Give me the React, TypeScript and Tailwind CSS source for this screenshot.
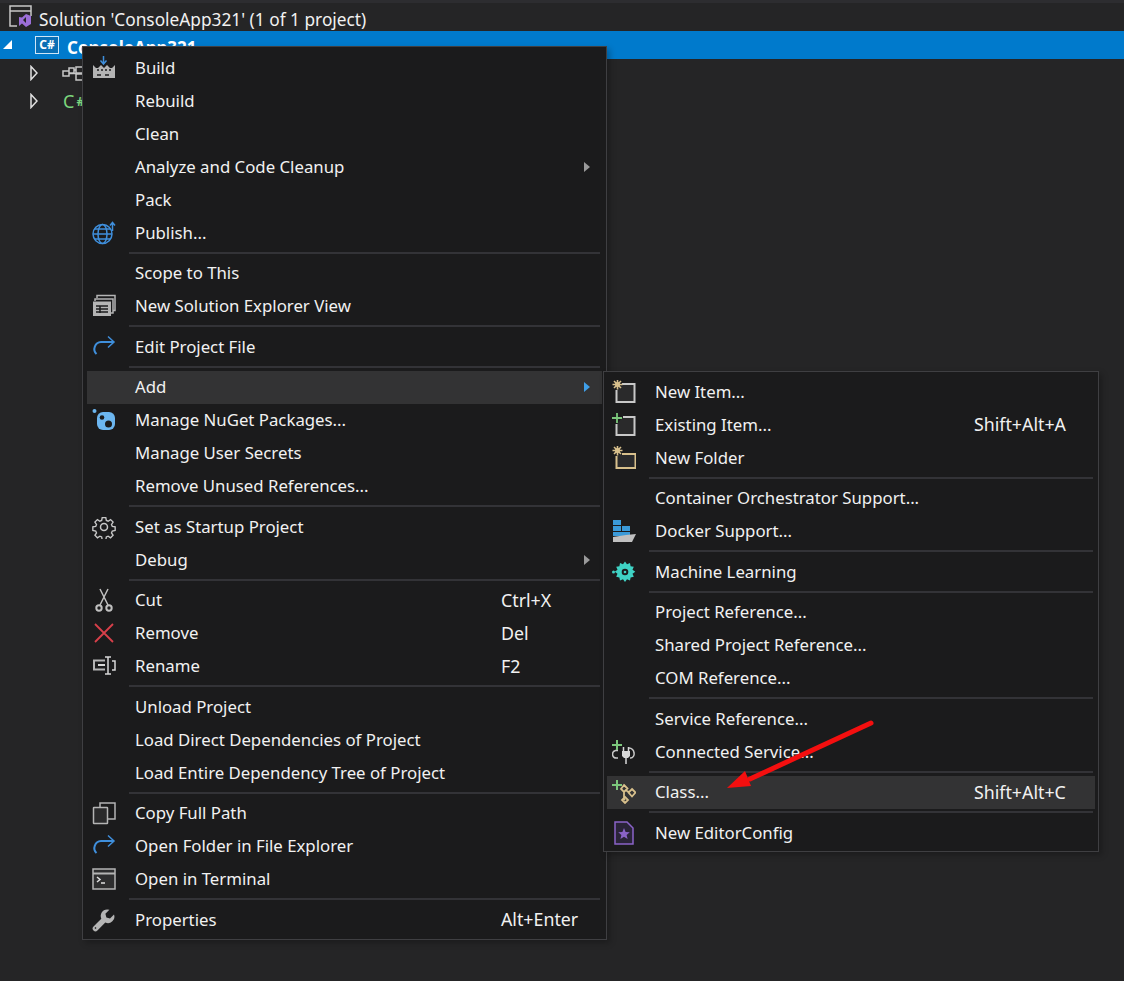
// App.tsx
import type { ReactNode } from 'react';

const GRAY = '#c8c8c8';
const BLUE = '#3f8fdc';
const TAN = '#d8c08c';
const GREEN = '#7cc87c';

const Icon = ({ children }: { children: ReactNode }) => (
  <svg width="24" height="24" viewBox="0 0 24 24" fill="none" strokeWidth="1.5">
    {children}
  </svg>
);

const BuildIcon = () => (
  <Icon>
    <path d="M1 9v13h22V9l-3 3h-2l-3-3-3 3-3-3-3 3H4z" fill="#b4b4b4" />
    <path d="M11.500 0v7M8.500 4.500l3 3.500 3-3.500" stroke={BLUE} />
    <path d="M5 14h2M9 14h2M13 14h2M17 14h2M5 19h4M13 19h4" stroke="#1b1b1c" />
  </Icon>
);

const PublishIcon = () => (
  <Icon>
    <circle cx="10.500" cy="13" r="9.500" stroke={BLUE} />
    <ellipse cx="10.500" cy="13" rx="4.500" ry="9.500" stroke={BLUE} />
    <path d="M1 13h19M2.500 8h16M2.500 18h16M20.500 10V2M18 4.500l2.500-3 2.500 3" stroke={BLUE} />
  </Icon>
);

const ExplorerIcon = () => (
  <Icon>
    <path d="M5 4V1.500h18v15h-2M3 7V5h18v14h-2" stroke="#b4b4b4" />
    <rect x="1" y="7.500" width="18" height="14.500" fill="#b4b4b4" />
    <path d="M4 12h12M4 15h12M4 18h12M8 12v7" stroke="#1b1b1c" />
  </Icon>
);

const RedoIcon = () => (
  <Icon>
    <path d="M21 9H9a7 7 0 0 0-4.500 12" stroke={BLUE} strokeWidth="2" transform="translate(0 -2)" />
    <path d="M16 1.500 22 7l-6 5.500" stroke={BLUE} />
  </Icon>
);

const NugetIcon = () => (
  <Icon>
    <circle cx="2.500" cy="3" r="2" fill="#6cb6f0" />
    <rect x="5" y="4" width="18" height="18" rx="6" fill="#6cb6f0" />
    <circle cx="10" cy="9.500" r="2.300" fill="#1b1b1c" />
    <circle cx="16.500" cy="16" r="3.500" fill="#1b1b1c" />
  </Icon>
);

const GearIcon = () => (
  <Icon>
    <circle cx="12" cy="12" r="3.500" stroke={GRAY} />
    <path
      d="M10 1.500h4l.6 3.200 2 .9 2.700-1.800 2.800 2.800-1.800 2.700.9 2 3.200.6v4l-3.200.6-.9 2 1.800 2.700-2.800 2.800-2.700-1.800-2 .9-.6 3.200h-4l-.6-3.200-2-.9-2.700 1.800-2.800-2.800 1.800-2.700-.9-2-3.200-.6v-4l3.200-.6.9-2-1.800-2.700 2.800-2.800 2.700 1.800 2-.9z"
      transform="translate(1.200 1.200) scale(.9)"
      stroke={GRAY}
    />
  </Icon>
);

const CutIcon = () => (
  <Icon>
    <path d="M8 1l8 16M16 1L8 17" stroke="#c0c0c0" />
    <circle cx="7" cy="20" r="2.700" stroke="#c0c0c0" strokeWidth="2" />
    <circle cx="17" cy="20" r="2.700" stroke="#c0c0c0" strokeWidth="2" />
  </Icon>
);

const RemoveIcon = () => (
  <Icon>
    <path d="M3 3l18 18M21 3L3 21" stroke="#d8404a" strokeWidth="1.800" />
  </Icon>
);

const RenameIcon = () => (
  <Icon>
    <path d="M13 6.500H2v9h11" stroke="#b4b4b4" strokeWidth="2" />
    <path d="M6 11h7" stroke="#d8d8d8" strokeWidth="2" />
    <path d="M13 3h6M13 20h6M16 3v17M20 7h3v9h-3" stroke="#d8d8d8" />
  </Icon>
);

const CopyIcon = () => (
  <Icon>
    <path d="M8 6V2h15v16h-7" stroke="#b4b4b4" />
    <rect x="1.500" y="6.500" width="14" height="16" rx=".5" stroke="#b4b4b4" fill="#2a2a2b" />
  </Icon>
);

const TerminalIcon = () => (
  <Icon>
    <rect x="1" y="2" width="22" height="20" stroke="#b4b4b4" fill="#2e2e2f" />
    <path d="M1 6.500h22" stroke="#b4b4b4" strokeWidth="2" />
    <path d="M5 10l3 2.500-3 2.500M9 16h4" stroke="#e0e0e0" />
  </Icon>
);

const WrenchIcon = () => (
  <Icon>
    <path
      d="M15 1.500a6.500 6.500 0 0 0-5.700 9.200L1.500 18.500a2.700 2.700 0 0 0 3.900 3.900l7.900-7.800a6.500 6.500 0 0 0 8.700-8.200l-4 4-3.600-1-1-3.600 4-4a6 6 0 0 0-2.400-.3z"
      fill="#b4b4b4"
    />
    <path d="M3 20.500l1-1" stroke="#1b1b1c" />
  </Icon>
);

const Spark = ({ x, y }: { x: number; y: number }) => (
  <g transform={`translate(${x} ${y})`}>
    <circle r="2.500" fill={TAN} />
    <path d="M0-5V5M-5 0H5M-3.500-3.500l7 7M3.500-3.500l-7 7" stroke={TAN} strokeWidth="1.600" />
  </g>
);

const NewItemIcon = () => (
  <Icon>
    <path d="M10 4h12.500v18H4.500V10" stroke="#c8c8c8" fill="#2a2a2b" strokeWidth="2" />
    <Spark x={5.5} y={4.5} />
  </Icon>
);

const ExistingItemIcon = () => (
  <Icon>
    <path d="M11 4h11.500v18H4.500V11" stroke="#c8c8c8" fill="#2a2a2b" strokeWidth="2" />
    <path d="M5 0v10M0 5h10" stroke={GREEN} strokeWidth="1.800" />
  </Icon>
);

const NewFolderIcon = () => (
  <Icon>
    <path d="M10 8h13.500v14H4.500V10" stroke={TAN} fill="#2a2a2b" strokeWidth="2" />
    <Spark x={5.5} y={4.5} />
  </Icon>
);

const DockerIcon = () => (
  <Icon>
    <rect x="1" y="1" width="8" height="5" fill="#3a9ad9" />
    <rect x="1" y="7" width="8" height="5" fill="#3a9ad9" />
    <rect x="10" y="7" width="8" height="5" fill="#3a9ad9" />
    <rect x="1" y="13" width="17" height="4" fill="#3a9ad9" />
    <path d="M1 23v-5l13-2 10-1-4 8z" fill="#c0c0c0" />
  </Icon>
);

const MlIcon = () => (
  <Icon>
    <path
      d="M12 1.500l2 2.800 3-1.300.6 3.200 3.200.6-1.300 3 2.800 2-2.800 2 1.300 3-3.200.6-.6 3.200-3-1.300-2 2.800-2-2.800-3 1.300-.6-3.200-3.200-.6 1.300-3-2.800-2 2.800-2-1.300-3 3.200-.6.600-3.200 3 1.300z"
      fill="#3fd2c4"
      transform="translate(1 0)"
    />
    <circle cx="13" cy="12" r="3.300" fill="#1b1b1c" />
    <circle cx="13" cy="12" r="1.300" fill="#3fd2c4" />
    <circle cx="1.500" cy="12" r="1.500" fill="#3fd2c4" />
  </Icon>
);

const ConnectedIcon = () => (
  <Icon>
    <path d="M6 18H4.500a3.800 3.800 0 0 1-1-7.500H6M17 8a5 5 0 0 1 5 5 4 4 0 0 1-3.500 5H18" stroke="#c8c8c8" />
    <path d="M10 11h8v5l-2 2h-4l-2-2z" fill="#d8d8d8" />
    <path d="M14 18v6M11.500 7v4M16.500 7v4" stroke="#d8d8d8" />
    <path d="M5 0v10M0 5h10" stroke={GREEN} strokeWidth="2" />
  </Icon>
);

const ClassIcon = () => (
  <Icon>
    <path d="M5 0v10M0 5h10" stroke={GREEN} strokeWidth="2" />
    <path d="M12 5l3.500 3.500-3.500 3.500-3-3zM20 9l3.500 3.500-3.500 4-3.500-4zM13 17l3 3-3 3-3-3zM13 10l4 2M12 12v7l1 1" stroke={TAN} strokeWidth="1.800" />
  </Icon>
);

const EditorConfigIcon = () => (
  <Icon>
    <path d="M3 1h12l6 6v16H3z" stroke="#8a63c8" fill="#2a2438" />
    <path d="M12 7l1.600 3.900 4.200.3-3.200 2.700 1 4.100-3.600-2.200-3.600 2.200 1-4.100-3.200-2.700 4.200-.3z" fill="#8a63c8" />
  </Icon>
);

const SolutionIcon = () => (
  <svg width="24" height="24" viewBox="0 0 24 24" fill="none" strokeWidth="1.500">
    <path d="M8 21H1V1h21v10M1 6h21" stroke="#c8c8c8" />
    <path d="M10 12v9l3-2.500 4 3.500 5-3V11l-5-2-4 3.500zM17 12l-3 3 3 3z" fill="#9b6fd8" fillRule="evenodd" />
  </svg>
);

interface Entry {
  label?: string;
  icon?: ReactNode;
  shortcut?: string;
  sub?: boolean;
  active?: boolean;
  arrowBlue?: boolean;
}

const mainMenu: Entry[] = [
  { label: 'Build', icon: <BuildIcon /> },
  { label: 'Rebuild' },
  { label: 'Clean' },
  { label: 'Analyze and Code Cleanup', sub: true },
  { label: 'Pack' },
  { label: 'Publish...', icon: <PublishIcon /> },
  {},
  { label: 'Scope to This' },
  { label: 'New Solution Explorer View', icon: <ExplorerIcon /> },
  {},
  { label: 'Edit Project File', icon: <RedoIcon /> },
  {},
  { label: 'Add', sub: true, active: true, arrowBlue: true },
  { label: 'Manage NuGet Packages...', icon: <NugetIcon /> },
  { label: 'Manage User Secrets' },
  { label: 'Remove Unused References...' },
  {},
  { label: 'Set as Startup Project', icon: <GearIcon /> },
  { label: 'Debug', sub: true },
  {},
  { label: 'Cut', icon: <CutIcon />, shortcut: 'Ctrl+X' },
  { label: 'Remove', icon: <RemoveIcon />, shortcut: 'Del' },
  { label: 'Rename', icon: <RenameIcon />, shortcut: 'F2' },
  {},
  { label: 'Unload Project' },
  { label: 'Load Direct Dependencies of Project' },
  { label: 'Load Entire Dependency Tree of Project' },
  {},
  { label: 'Copy Full Path', icon: <CopyIcon /> },
  { label: 'Open Folder in File Explorer', icon: <RedoIcon /> },
  { label: 'Open in Terminal', icon: <TerminalIcon /> },
  {},
  { label: 'Properties', icon: <WrenchIcon />, shortcut: 'Alt+Enter' },
];

const addMenu: Entry[] = [
  { label: 'New Item...', icon: <NewItemIcon /> },
  { label: 'Existing Item...', icon: <ExistingItemIcon />, shortcut: 'Shift+Alt+A' },
  { label: 'New Folder', icon: <NewFolderIcon /> },
  {},
  { label: 'Container Orchestrator Support...' },
  { label: 'Docker Support...', icon: <DockerIcon /> },
  {},
  { label: 'Machine Learning', icon: <MlIcon /> },
  {},
  { label: 'Project Reference...' },
  { label: 'Shared Project Reference...' },
  { label: 'COM Reference...' },
  {},
  { label: 'Service Reference...' },
  { label: 'Connected Service...', icon: <ConnectedIcon /> },
  {},
  { label: 'Class...', icon: <ClassIcon />, shortcut: 'Shift+Alt+C', active: true },
  {},
  { label: 'New EditorConfig', icon: <EditorConfigIcon /> },
];

const Menu = ({ items, shortcutClass }: { items: Entry[]; shortcutClass: string }) => (
  <>
    {items.map((item, i) =>
      item.label ? (
        <div key={i} className={`flex h-[33px] items-center ${item.active ? 'bg-[#333334]' : ''}`}>
          <span className="flex w-[48px] shrink-0 justify-start pl-[5px]">{item.icon}</span>
          <span className="flex-1 whitespace-nowrap">{item.label}</span>
          <span className={`flex shrink-0 items-center text-[17.8px] ${shortcutClass}`}>
            {item.shortcut}
            {item.sub && (
              <span
                className={`ml-auto mr-[12px] h-0 w-0 border-y-[5px] border-l-[6px] border-y-transparent ${
                  item.arrowBlue ? 'border-l-[#3f9fe8]' : 'border-l-[#9a9a9a]'
                }`}
              />
            )}
          </span>
        </div>
      ) : (
        <div key={i} className="flex h-[7.5px] items-center pl-[42px] pr-[2px]">
          <div className="h-[2px] w-full bg-[#333337]" />
        </div>
      ),
    )}
  </>
);

const HollowArrow = () => (
  <svg width="8" height="16" viewBox="0 0 8 16" fill="none" className="ml-[30px]">
    <path d="M1 1.500 7 8l-6 6.500z" stroke="#e0e0e0" strokeWidth="1.500" />
  </svg>
);

export default function App() {
  return (
    <div className="relative h-[981px] w-full overflow-hidden bg-[#252526] font-['Noto_Sans','Open_Sans',sans-serif] text-[16.8px] text-[#f1f1f1]">
      <div className="h-[3px] bg-[#2d2d30]" />

      <div className="flex h-[28px] items-center pl-[9px]">
        <SolutionIcon />
        <span className="ml-[6px] mt-[5px] whitespace-nowrap text-[17.3px]">Solution 'ConsoleApp321' (1 of 1 project)</span>
      </div>

      <div className="flex h-[28px] items-center bg-[#007acc] pl-[3px] text-white">
        <svg width="10" height="10" viewBox="0 0 10 10">
          <path d="M9 0v9H0z" fill="#ffffff" />
        </svg>
        <span className="ml-[22px] flex h-[18px] w-[24px] items-center justify-center border border-[#cfe6f7] bg-[#0a6fb5] text-[12px] font-bold leading-none">
          C#
        </span>
        <span className="ml-[8px] mt-[5px] text-[17px] font-bold">ConsoleApp321</span>
      </div>

      <div className="flex h-[28px] items-center">
        <HollowArrow />
        <svg width="22" height="16" viewBox="0 0 22 16" fill="none" className="ml-[24px]" stroke="#c8c8c8" strokeWidth="1.500">
          <path d="M1 6h6v5H1zM7 3h5v5H7zM14 2h7v6h-7zM14 9h7v6h-7zM12 5h2M7 8.500h7" />
        </svg>
      </div>

      <div className="flex h-[28px] items-center">
        <HollowArrow />
        <span className="ml-[25px] flex items-center leading-none text-[#7cd67c]">
          <span className="text-[18px]">C</span>
          <span className="ml-[2px] text-[13px] font-bold">#</span>
        </span>
      </div>

      <div className="absolute left-[82px] top-[46px] w-[525px] border border-[#3f3f42] bg-[#1b1b1c] px-[4px] pb-[3px] pt-[4px] shadow-[3px_3px_6px_rgba(0,0,0,0.25)]">
        <Menu items={mainMenu} shortcutClass="w-[101px]" />
      </div>

      <div className="absolute left-[603px] top-[371px] w-[496px] border border-[#3f3f42] bg-[#1b1b1c] px-[3px] pb-[2px] pt-[3px] shadow-[3px_3px_6px_rgba(0,0,0,0.25)]">
        <Menu items={addMenu} shortcutClass="w-[121px]" />
      </div>

      <svg className="absolute left-[720px] top-[715px]" width="160" height="80" viewBox="0 0 160 80" fill="none">
        <path d="M151 8 30 64" stroke="#f40f0f" strokeWidth="5" strokeLinecap="round" />
        <path d="M7 73 25 56 31 71z" fill="#f40f0f" />
      </svg>
    </div>
  );
}
